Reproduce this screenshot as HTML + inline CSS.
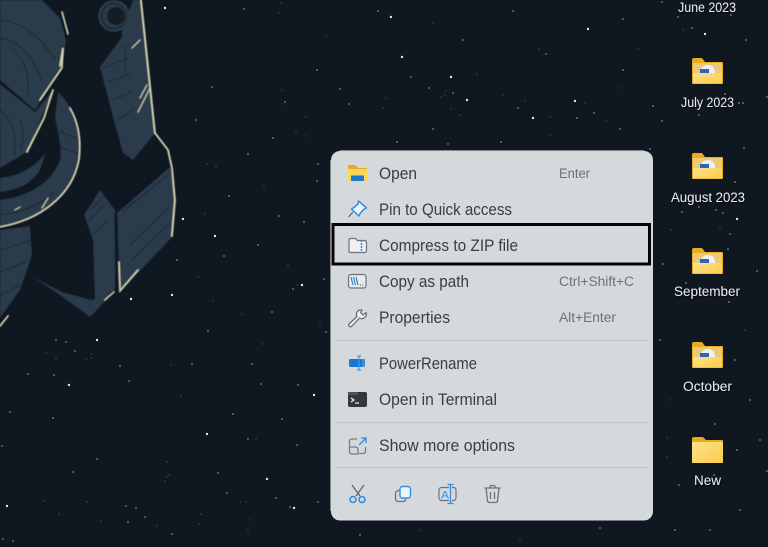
<!DOCTYPE html>
<html><head><meta charset="utf-8"><style>
html,body{margin:0;padding:0;width:768px;height:547px;overflow:hidden;background:#0f1721}
svg{display:block}
text{font-family:"Liberation Sans",sans-serif}
.m{font-size:16.5px;fill:#3b3e41}
.s{font-size:13.5px;fill:#6e7175}
.d{font-size:13.5px;fill:#e6e9ec;text-anchor:middle;filter:url(#ts)}
.dim circle{r:.7px}
.mid circle{r:.85px}
.bri circle{r:1.2px}
</style></head><body>
<svg width="768" height="547" viewBox="0 0 768 547" xmlns="http://www.w3.org/2000/svg">
<defs>
<linearGradient id="fy" x1="0" y1="0" x2="1" y2="1"><stop offset="0" stop-color="#fde28c"/><stop offset="1" stop-color="#fbcb4c"/></linearGradient>
<filter id="ts" x="-10%" y="-30%" width="120%" height="160%"><feDropShadow dx="1" dy="1" stdDeviation="0.6" flood-color="#000" flood-opacity=".9"/></filter>
<filter id="b" x="-5%" y="-5%" width="110%" height="110%"><feGaussianBlur stdDeviation="0.45"/></filter>
<filter id="sb" x="0" y="0" width="100%" height="100%"><feGaussianBlur stdDeviation="0.35"/></filter>
<g id="cf"><path d="M0 2q0-2 2-2h8l3 4h17q1 0 1 1v20q0 1-1 1H1q-1 0-1-1z" fill="#e9ab22"/><rect x="1" y="5" width="29" height="12" fill="#ecc877"/><path d="M8 15q1-8 8-8t7 8z" fill="#eef0f2"/><rect x="8" y="11" width="9" height="4.500" fill="#2f66b8"/><path d="M1 15h29v9.500q0 1-1 1H2q-1 0-1-1z" fill="url(#fy)"/></g>
</defs>
<rect width="768" height="547" fill="#0f1721"/>
<g filter="url(#sb)">
<g class="dim" fill="#5a646e" opacity=".7">
<circle cx="281" cy="3" r=".8"/><circle cx="279" cy="13" r=".8"/><circle cx="326" cy="36" r=".8"/><circle cx="282" cy="104" r=".8"/><circle cx="282" cy="90" r=".8"/><circle cx="433" cy="23" r=".8"/><circle cx="383" cy="108" r=".8"/><circle cx="386" cy="98" r=".8"/><circle cx="446" cy="91" r=".8"/><circle cx="445" cy="95" r=".8"/><circle cx="441" cy="97" r=".8"/><circle cx="451" cy="109" r=".8"/><circle cx="460" cy="115" r=".8"/><circle cx="477" cy="74" r=".8"/><circle cx="306" cy="117" r=".8"/><circle cx="306" cy="136" r=".8"/><circle cx="296" cy="132" r=".8"/><circle cx="92" cy="354" r=".8"/><circle cx="91" cy="358" r=".8"/><circle cx="86" cy="359" r=".8"/><circle cx="56" cy="359" r=".8"/><circle cx="46" cy="353" r=".8"/><circle cx="171" cy="365" r=".8"/><circle cx="181" cy="396" r=".8"/><circle cx="167" cy="462" r=".8"/><circle cx="169" cy="475" r=".8"/><circle cx="167" cy="477" r=".8"/><circle cx="165" cy="481" r=".8"/><circle cx="241" cy="502" r=".8"/><circle cx="246" cy="502" r=".8"/><circle cx="250" cy="520" r=".8"/><circle cx="248" cy="530" r=".8"/><circle cx="199" cy="524" r=".8"/><circle cx="201" cy="514" r=".8"/><circle cx="157" cy="526" r=".8"/><circle cx="44" cy="501" r=".8"/><circle cx="87" cy="502" r=".8"/><circle cx="59" cy="514" r=".8"/><circle cx="101" cy="521" r=".8"/><circle cx="256" cy="439" r=".8"/><circle cx="263" cy="344" r=".8"/><circle cx="539" cy="49" r=".8"/><circle cx="638" cy="49" r=".8"/><circle cx="585" cy="103" r=".8"/><circle cx="525" cy="101" r=".8"/><circle cx="503" cy="95" r=".8"/><circle cx="619" cy="88" r=".8"/><circle cx="606" cy="121" r=".8"/><circle cx="550" cy="117" r=".8"/><circle cx="550" cy="135" r=".8"/><circle cx="213" cy="301" r=".8"/><circle cx="198" cy="277" r=".8"/><circle cx="242" cy="314" r=".8"/><circle cx="288" cy="265" r=".8"/><circle cx="297" cy="285" r=".8"/><circle cx="320" cy="326" r=".8"/><circle cx="264" cy="186" r=".8"/><circle cx="216" cy="167" r=".8"/><circle cx="207" cy="164" r=".8"/><circle cx="205" cy="214" r=".8"/><circle cx="683" cy="30" r=".8"/><circle cx="667" cy="438" r=".8"/><circle cx="667" cy="457" r=".8"/><circle cx="671" cy="230" r=".8"/><circle cx="720" cy="228" r=".8"/><circle cx="420" cy="530" r=".8"/><circle cx="520" cy="540" r=".8"/><circle cx="745" cy="330" r=".8"/><circle cx="670" cy="400" r=".8"/>
</g>
<g class="mid" fill="#a4a9ab" opacity=".8">
<circle cx="244" cy="9" r="1"/><circle cx="212" cy="87" r="1"/><circle cx="196" cy="120" r="1"/><circle cx="285" cy="102" r="1"/><circle cx="317" cy="70" r="1"/><circle cx="340" cy="89" r="1"/><circle cx="349" cy="104" r="1"/><circle cx="378" cy="11" r="1"/><circle cx="411" cy="77" r="1"/><circle cx="429" cy="88" r="1"/><circle cx="453" cy="93" r="1"/><circle cx="463" cy="40" r="1"/><circle cx="433" cy="129" r="1"/><circle cx="273" cy="138" r="1"/><circle cx="397" cy="142" r="1"/><circle cx="448" cy="144" r="1"/><circle cx="56" cy="340" r="1"/><circle cx="66" cy="342" r="1"/><circle cx="75" cy="351" r="1"/><circle cx="28" cy="374" r="1"/><circle cx="54" cy="375" r="1"/><circle cx="120" cy="366" r="1"/><circle cx="129" cy="381" r="1"/><circle cx="192" cy="364" r="1"/><circle cx="252" cy="364" r="1"/><circle cx="261" cy="384" r="1"/><circle cx="282" cy="419" r="1"/><circle cx="233" cy="414" r="1"/><circle cx="10" cy="412" r="1"/><circle cx="53" cy="418" r="1"/><circle cx="2" cy="446" r="1"/><circle cx="97" cy="459" r="1"/><circle cx="73" cy="472" r="1"/><circle cx="218" cy="473" r="1"/><circle cx="227" cy="493" r="1"/><circle cx="276" cy="498" r="1"/><circle cx="318" cy="502" r="1"/><circle cx="290" cy="507" r="1"/><circle cx="126" cy="506" r="1"/><circle cx="145" cy="517" r="1"/><circle cx="3" cy="539" r="1"/><circle cx="13" cy="541" r="1"/><circle cx="128" cy="522" r="1"/><circle cx="136" cy="508" r="1"/><circle cx="172" cy="534" r="1"/><circle cx="248" cy="439" r="1"/><circle cx="297" cy="445" r="1"/><circle cx="298" cy="385" r="1"/><circle cx="208" cy="331" r="1"/><circle cx="513" cy="11" r="1"/><circle cx="546" cy="54" r="1"/><circle cx="623" cy="19" r="1"/><circle cx="662" cy="2" r="1"/><circle cx="623" cy="70" r="1"/><circle cx="594" cy="113" r="1"/><circle cx="577" cy="118" r="1"/><circle cx="518" cy="108" r="1"/><circle cx="501" cy="142" r="1"/><circle cx="653" cy="106" r="1"/><circle cx="662" cy="121" r="1"/><circle cx="620" cy="129" r="1"/><circle cx="650" cy="149" r="1"/><circle cx="248" cy="154" r="1"/><circle cx="229" cy="196" r="1"/><circle cx="224" cy="256" r="1"/><circle cx="177" cy="260" r="1"/><circle cx="258" cy="245" r="1"/><circle cx="324" cy="279" r="1"/><circle cx="272" cy="312" r="1"/><circle cx="326" cy="332" r="1"/><circle cx="293" cy="289" r="1"/><circle cx="279" cy="216" r="1"/><circle cx="304" cy="222" r="1"/><circle cx="318" cy="164" r="1"/><circle cx="317" cy="181" r="1"/><circle cx="699" cy="207" r="1"/><circle cx="682" cy="212" r="1"/><circle cx="723" cy="213" r="1"/><circle cx="716" cy="210" r="1"/><circle cx="735" cy="182" r="1"/><circle cx="744" cy="148" r="1"/><circle cx="663" cy="264" r="1"/><circle cx="757" cy="271" r="1"/><circle cx="728" cy="249" r="1"/><circle cx="730" cy="234" r="1"/><circle cx="686" cy="283" r="1"/><circle cx="729" cy="302" r="1"/><circle cx="692" cy="28" r="1"/><circle cx="746" cy="40" r="1"/><circle cx="731" cy="15" r="1"/><circle cx="678" cy="17" r="1"/><circle cx="743" cy="103" r="1"/><circle cx="739" cy="103" r="1"/><circle cx="725" cy="94" r="1"/><circle cx="767" cy="97" r="1"/><circle cx="699" cy="115" r="1"/><circle cx="715" cy="424" r="1"/><circle cx="737" cy="450" r="1"/><circle cx="767" cy="471" r="1"/><circle cx="679" cy="485" r="1"/><circle cx="714" cy="475" r="1"/><circle cx="360" cy="535" r="1"/><circle cx="600" cy="528" r="1"/><circle cx="660" cy="340" r="1"/><circle cx="735" cy="360" r="1"/><circle cx="750" cy="400" r="1"/><circle cx="760" cy="440" r="1"/><circle cx="675" cy="530" r="1"/><circle cx="740" cy="510" r="1"/><circle cx="710" cy="530" r="1"/>
</g>
<g class="bri" fill="#e6e6d6">
<circle cx="391" cy="17" r="1.3"/><circle cx="402" cy="57" r="1.3"/><circle cx="467" cy="100" r="1.5"/><circle cx="451" cy="77" r="1.2"/><circle cx="69" cy="385" r="1.5"/><circle cx="97" cy="340" r="1.3"/><circle cx="207" cy="434" r="1.5"/><circle cx="314" cy="395" r="1.5"/><circle cx="267" cy="479" r="1.4"/><circle cx="7" cy="506" r="1.5"/><circle cx="294" cy="508" r="1.3"/><circle cx="533" cy="118" r="1.5"/><circle cx="588" cy="29" r="1.2"/><circle cx="575" cy="101" r="1.2"/><circle cx="172" cy="295" r="1.4"/><circle cx="215" cy="236" r="1.4"/><circle cx="302" cy="285" r="1.2"/><circle cx="183" cy="219" r="1.3"/><circle cx="737" cy="219" r="1.4"/><circle cx="705" cy="34" r="1.4"/><circle cx="165" cy="8" r="1.8"/><circle cx="131" cy="299" r="1.3"/>
</g>
</g>
<g filter="url(#b)">
<g fill="#2c3b4b">
<path d="M0 0H42L60 18L66 40L62 68L35 110L0 80Z"/>
<path d="M0 84L35 112L53 90L27 152L0 168Z"/>
<path d="M0 178C20 176 36 166 46 152L40 170C30 186 15 190 0 192Z"/>
<path d="M0 200C30 196 52 182 60 160C62 150 58 132 55 118L58 92C72 105 82 128 80 152C79 190 50 215 0 228Z"/>
<path d="M0 230L30 226L32 255L20 290L0 318Z"/>
<path d="M122 30L133 0H141L155 133L133 160L123 153L113 117L100 67L122 37Z"/>
<circle cx="114" cy="16" r="16"/>
<path d="M170 167L175 200L172 237L120 292L117 213Z"/>
<path d="M84 215L100 190L115 210V290L95 302L93 240Z"/>
<path d="M33 277L60 295L90 317L113 293L92 300L62 292Z"/>
</g>
<circle cx="116" cy="16" r="9" fill="#131c27"/>
<circle cx="114" cy="16" r="12.500" fill="none" stroke="#131c27" stroke-width="1"/>
<g fill="none" stroke="#0f1721" stroke-width=".8" opacity=".8">
<path d="M0 20C20 22 40 35 55 60M0 38C20 42 32 55 42 80M12 48C25 60 30 75 28 95"/>
<path d="M0 110C12 120 18 135 14 155M20 120C24 128 24 140 20 150"/>
<path d="M60 130C68 138 78 136 80 140M58 145C66 152 76 150 80 156M0 215C25 212 42 204 54 192M0 250L32 240M0 272L26 262M0 295L20 285"/>
<path d="M125 45V70M103 68L128 58M108 82L130 74M112 100L132 92M118 120L135 108"/>
<path d="M122 212L168 175M130 245L168 208M130 262L168 225M90 210L105 195M88 222L104 205M93 235L108 220"/>
</g>
<path d="M118 206L168 164M116 214L117 292" fill="none" stroke="#0f1721" stroke-width="3"/>
<g fill="none" stroke="#d9d6b2" stroke-linecap="round">
<path d="M141 0L155 133L168 150L172 168L175 200L172 236" stroke-width="1.800"/>
<path d="M62 12L68 34M60 66L63 48L62 68L40 100" stroke-width="1.600"/>
<path d="M53 90L44 118L27 152" stroke-width="1.800"/>
<path d="M0 227C40 220 72 196 79 160C82 135 76 118 70 108" stroke-width="1.600"/>
<path d="M119 262L120 291L138 270" stroke-width="1.500"/>
<path d="M105 300L114 292" stroke-width="1.500"/>
<path d="M0 326L8 316" stroke-width="1.800"/>
<path d="M140 40L132 48M147 85L140 98M150 88L138 112M42 208L48 198M15 210L20 207" stroke-width="1"/>
</g>
</g>

<!-- desktop icons -->
<use href="#cf" x="692" y="58"/>
<use href="#cf" x="692" y="153"/>
<use href="#cf" x="692" y="248"/>
<use href="#cf" x="692" y="342"/>
<path d="M692 439q0-2 2-2h9l3 3h16q1 0 1 1v21q0 1-1 1h-29q-1 0-1-1z" fill="#e9a91c"/>
<path d="M692 442h31v20q0 1-1 1h-29q-1 0-1-1z" fill="url(#fy)"/>
<text class="d" x="707" y="12" textLength="58" lengthAdjust="spacingAndGlyphs">June 2023</text>
<text class="d" x="707.500" y="107" textLength="53" lengthAdjust="spacingAndGlyphs">July 2023</text>
<text class="d" x="708" y="202" textLength="74" lengthAdjust="spacingAndGlyphs">August 2023</text>
<text class="d" x="707" y="296" textLength="66" lengthAdjust="spacingAndGlyphs">September</text>
<text class="d" x="707.500" y="391" textLength="49" lengthAdjust="spacingAndGlyphs">October</text>
<text class="d" x="707.500" y="485" textLength="27" lengthAdjust="spacingAndGlyphs">New</text>

<!-- menu -->
<rect x="331" y="151" width="322" height="369.500" rx="9" fill="#d5d9dc"/>
<path d="M340 150.500H644M330.500 160V511" stroke="#7f8387" stroke-width="1" fill="none"/>
<g stroke="#c3c6c9" stroke-width="1"><path d="M335 340.500H649M335 422.500H649M335 467.500H649"/></g>
<rect x="333" y="224.500" width="316.500" height="39.500" fill="none" stroke="#050505" stroke-width="3"/>

<text class="m" x="379" y="179" textLength="38" lengthAdjust="spacingAndGlyphs">Open</text>
<text class="m" x="379" y="215" textLength="133" lengthAdjust="spacingAndGlyphs">Pin to Quick access</text>
<text class="m" x="379" y="251" textLength="139" lengthAdjust="spacingAndGlyphs">Compress to ZIP file</text>
<text class="m" x="379" y="287" textLength="90" lengthAdjust="spacingAndGlyphs">Copy as path</text>
<text class="m" x="379" y="323" textLength="71" lengthAdjust="spacingAndGlyphs">Properties</text>
<text class="m" x="379" y="369" textLength="98" lengthAdjust="spacingAndGlyphs">PowerRename</text>
<text class="m" x="379" y="405" textLength="118" lengthAdjust="spacingAndGlyphs">Open in Terminal</text>
<text class="m" x="379" y="451" textLength="136" lengthAdjust="spacingAndGlyphs">Show more options</text>
<text class="s" x="559" y="178" textLength="31" lengthAdjust="spacingAndGlyphs">Enter</text>
<text class="s" x="559" y="286" textLength="75" lengthAdjust="spacingAndGlyphs">Ctrl+Shift+C</text>
<text class="s" x="559" y="322" textLength="57" lengthAdjust="spacingAndGlyphs">Alt+Enter</text>

<!-- open -->
<path d="M348 166q0-1 1-1h6l3 3h9v13h-19z" fill="#e8a91f"/>
<path d="M348 169h19v11q0 1-1 1h-17q-1 0-1-1z" fill="#fcd55f"/>
<rect x="351" y="175.500" width="13" height="5.500" fill="#1c78c8"/>
<!-- pin -->
<path d="M358.500 201l8 7-3 1.500-3.500 4-1 2.500-7.500-7 2.500-1.500 4-3.500z" fill="#f2f6fa" stroke="#2f8fe8" stroke-width="1.500" stroke-linejoin="round"/>
<path d="M353 212l-4.500 5" stroke="#666" stroke-width="1.300"/>
<!-- compress -->
<path d="M349 240q0-1.500 1.500-1.500h5l2 2h7q2 0 2 2v8q0 2-2 2h-14q-1.500 0-1.500-1.500z" fill="#eef0f1" stroke="#6f7377" stroke-width="1.200"/>
<path d="M361.500 240v13" stroke="#2f8fe8" stroke-width="1.500" stroke-dasharray="2 1"/>
<!-- copy as path -->
<rect x="348.500" y="274.500" width="17.500" height="13.500" rx="2.500" fill="#e8eaec" stroke="#6f7377" stroke-width="1.200"/>
<path d="M351 277l2 8M353.500 277l2 8M356 277l2 8" stroke="#2580d8" stroke-width="1.100"/>
<path d="M360 285h4" stroke="#555" stroke-width="1.100" stroke-dasharray="1 1"/>
<!-- wrench -->
<path d="M362 310a4.500 4.500 0 0 0-5 6.500l-8 7.500q-1 1.500.5 2.500t2.500-.5l7.500-8a4.500 4.500 0 0 0 6.500-5.500l-3 2.500-2.500-2.500z" fill="#eef0f1" stroke="#66696d" stroke-width="1.200" stroke-linejoin="round"/>
<!-- powerrename -->
<rect x="349" y="359" width="13" height="8" rx="1.500" fill="#1b78cf"/>
<rect x="361" y="359" width="4" height="8" rx="1" fill="#1b78cf" opacity=".8"/>
<path d="M357 356h4M359 356v14M357 370h4" stroke="#34a3ee" stroke-width="1.200" fill="none"/>
<!-- terminal -->
<path d="M348 394q0-2 2-2h15q2 0 2 2v11q0 2-2 2h-15q-2 0-2-2z" fill="#35383a"/>
<rect x="348" y="392" width="10" height="3" fill="#505356"/>
<path d="M351 398l3 2-3 2" stroke="#fff" stroke-width="1.100" fill="none"/>
<path d="M355 403h4" stroke="#fff" stroke-width="1.100"/>
<!-- show more -->
<path d="M357 439h-5q-2.500 0-2.500 2.500v5M365.500 447v4q0 2.500-2.500 2.500h-4" fill="none" stroke="#7b7f83" stroke-width="1.300"/>
<path d="M349.500 447h6q2.500 0 2.500 2.500v4.500h-6q-2.500 0-2.500-2.500z" fill="none" stroke="#7b7f83" stroke-width="1.300"/>
<path d="M359 445l6.500-6.500M361 438h5v5" fill="none" stroke="#2f8fe8" stroke-width="1.300"/>
<!-- cut -->
<g fill="none" stroke-width="1.400">
<path d="M352 485l8 11M364 485l-8 11" stroke="#666a6e"/>
<circle cx="353" cy="499.500" r="3" stroke="#2b86dc"/><circle cx="362" cy="499.500" r="3" stroke="#2b86dc"/>
</g>
<!-- copy -->
<rect x="400" y="486.500" width="10.500" height="11.500" rx="2.500" fill="#eef5fb" stroke="#2f8fe8" stroke-width="1.400"/>
<path d="M399.500 490.500h-1q-3 .5-3 3v5q0 3 3 3h4q3 0 3-2.500" fill="none" stroke="#6f7377" stroke-width="1.300"/>
<!-- rename -->
<rect x="439" y="487.500" width="17" height="13" rx="2.500" fill="none" stroke="#6f7377" stroke-width="1.200"/>
<rect x="449" y="487" width="3" height="14" fill="#d5d9dc"/>
<path d="M450.500 484.500v19M447.500 484.500h6M447.500 503.500h6" stroke="#2f8fe8" stroke-width="1.300" fill="none"/>
<text x="441" y="498.500" font-size="11" fill="#2f8fe8" textLength="8" lengthAdjust="spacingAndGlyphs">A</text>
<!-- trash -->
<path d="M484.500 488h16M489.500 488l1-2.500h4l1 2.500M486 488l1.500 13q.2 1.500 2 1.500h6q1.800 0 2-1.500l1.500-13" fill="none" stroke="#6f7377" stroke-width="1.300" stroke-linejoin="round"/>
<path d="M490.500 492v7M494.500 492v7" stroke="#6f7377" stroke-width="1.300"/>
</svg>
</body></html>
